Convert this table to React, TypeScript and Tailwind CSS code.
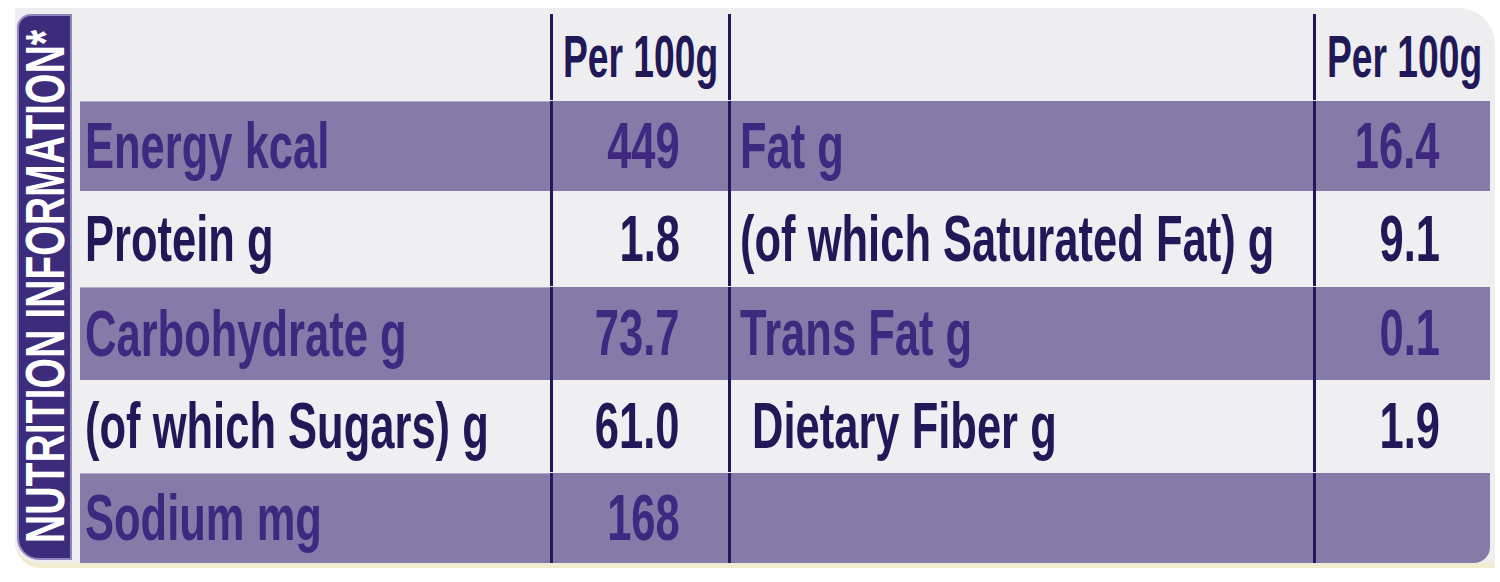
import React from 'react';

type Row = {
  label: string;
  value: string;
  label2: string;
  value2: string;
  indent2?: boolean;
  dark: boolean;
  h: string;
};

const rows: Row[] = [
  { label: 'Energy kcal', value: '449', label2: 'Fat g', value2: '16.4', dark: true, h: 'h-[90px]' },
  { label: 'Protein g', value: '1.8', label2: '(of which Saturated Fat) g', value2: '9.1', dark: false, h: 'h-[95px]' },
  { label: 'Carbohydrate g', value: '73.7', label2: 'Trans Fat g', value2: '0.1', dark: true, h: 'h-[93px]' },
  { label: '(of which Sugars) g', value: '61.0', label2: 'Dietary Fiber g', value2: '1.9', indent2: true, dark: false, h: 'h-[92px]' },
  { label: 'Sodium mg', value: '168', label2: '', value2: '', dark: true, h: 'h-[90px]' },
];

const font = "font-['Liberation_Sans',Arial,sans-serif] font-bold leading-none";

const Txt = ({ children, right }: { children: React.ReactNode; right?: boolean }) => (
  <span
    className={
      right
        ? 'inline-block whitespace-nowrap scale-x-[0.68] origin-right'
        : 'inline-block whitespace-nowrap scale-x-[0.68] origin-left'
    }
  >
    {children}
  </span>
);

export default function App() {
  return (
    <div className={`w-[1500px] h-[582px] bg-white pt-[8px] pl-[15px] ${font}`}>
      <div className="w-[1480px] h-[560px] bg-[#eeeef1] rounded-tr-[36px] rounded-bl-[26px] border-b-[5px] border-[#f1ebcf] pt-[6px] pl-[2px] flex">
        {/* side band */}
        <div className="w-[55px] h-[546px] bg-[#3d2c7c] border-2 border-[#9086bd] rounded-tl-[14px] rounded-bl-[22px] flex items-center justify-center">
          <span className="[writing-mode:vertical-rl] rotate-180 scale-y-[0.7] text-white text-[56px] whitespace-nowrap">
            NUTRITION INFORMATION*
          </span>
        </div>

        <div className="ml-[8px] w-[1410px] grid grid-cols-[470px_178px_585px_177px]">
          {/* header */}
          <div className="h-[86px]" />
          <div className="h-[86px] border-l-[3px] border-[#22165c] flex items-center pl-[10px] text-[60px] text-[#211858]">
            <span className="inline-block whitespace-nowrap scale-x-[0.62] origin-left">Per 100g</span>
          </div>
          <div className="h-[86px] border-l-[3px] border-[#22165c]" />
          <div className="h-[86px] border-l-[3px] border-[#22165c] flex items-center pl-[11px] text-[60px] text-[#211858]">
            <span className="inline-block whitespace-nowrap scale-x-[0.62] origin-left">Per 100g</span>
          </div>

          {rows.map((r, i) => {
            const bg = r.dark ? 'bg-[#867aa9] text-[#3d2a80]' : 'bg-[#efeff2] text-[#211858]';
            const last = i === rows.length - 1;
            return (
              <React.Fragment key={r.label}>
                <div className={`${r.h} ${bg} flex items-center pl-[5px] text-[64px] ${r.dark ? 'border-t border-[#b3abcc]' : ''}`}>
                  <Txt>{r.label}</Txt>
                </div>
                <div className={`${r.h} ${bg} border-l-[3px] border-[#22165c] flex items-center justify-end pr-[48px] text-[64px]`}>
                  <Txt right>{r.value}</Txt>
                </div>
                <div
                  className={`${r.h} ${bg} border-l-[3px] border-[#22165c] flex items-center text-[64px] ${
                    r.indent2 ? 'pl-[21px]' : 'pl-[9px]'
                  }`}
                >
                  {r.label2 && <Txt>{r.label2}</Txt>}
                </div>
                <div
                  className={`${r.h} ${bg} border-l-[3px] border-[#22165c] flex items-center justify-end pr-[50px] text-[64px] ${
                    last ? 'rounded-br-[16px]' : ''
                  }`}
                >
                  {r.value2 && <Txt right>{r.value2}</Txt>}
                </div>
              </React.Fragment>
            );
          })}
        </div>
      </div>
    </div>
  );
}
